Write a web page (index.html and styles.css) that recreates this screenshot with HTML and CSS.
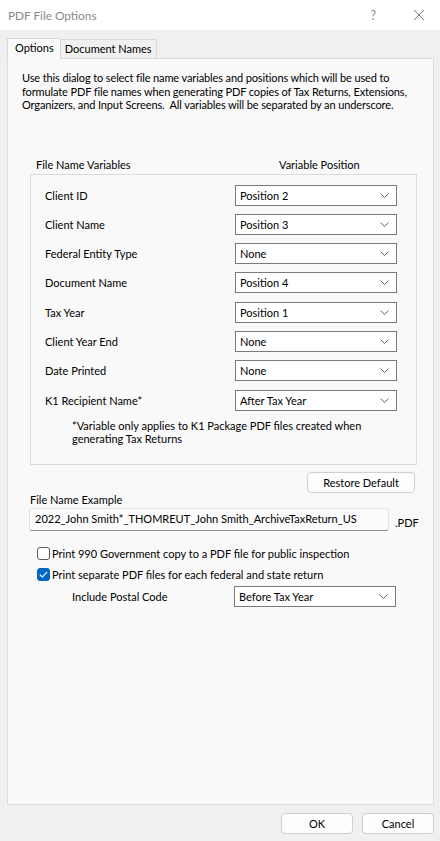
FILE: index.html
```html
<!DOCTYPE html>
<html lang="en">
<head>
    <meta charset="UTF-8">
    <title>PDF File Options</title>
    <link rel="stylesheet" href="styles.css">
</head>
<body>
    <div class="window">
        <div class="titlebar">
            <span class="title">PDF File Options</span>
            <span class="help">?</span>
            <svg class="close" width="12" height="12" viewBox="0 0 12 12">
                <path d="M1 1 L11 11 M11 1 L1 11" stroke="#777" stroke-width="1" fill="none"/>
            </svg>
        </div>

        <div class="tabs">
            <div class="tab active">Options</div>
            <div class="tab">Document Names</div>
        </div>

        <div class="panel">
            <p class="intro">Use this dialog to select file name variables and positions which will be used to formulate PDF file names when generating PDF copies of Tax Returns, Extensions, Organizers, and Input Screens.&nbsp; All variables will be separated by an underscore.</p>

            <div class="group-head">
                <span>File Name Variables</span>
                <span class="pos-head">Variable Position</span>
            </div>
            <div class="group">
                <div class="row"><span class="label">Client ID</span><div class="combo">Position 2<svg width="9" height="5" viewBox="0 0 9 5"><path d="M0.5 0.5 L4.5 4.5 L8.5 0.5" stroke="#666" fill="none"/></svg></div></div>
                <div class="row"><span class="label">Client Name</span><div class="combo">Position 3<svg width="9" height="5" viewBox="0 0 9 5"><path d="M0.5 0.5 L4.5 4.5 L8.5 0.5" stroke="#666" fill="none"/></svg></div></div>
                <div class="row"><span class="label">Federal Entity Type</span><div class="combo">None<svg width="9" height="5" viewBox="0 0 9 5"><path d="M0.5 0.5 L4.5 4.5 L8.5 0.5" stroke="#666" fill="none"/></svg></div></div>
                <div class="row"><span class="label">Document Name</span><div class="combo">Position 4<svg width="9" height="5" viewBox="0 0 9 5"><path d="M0.5 0.5 L4.5 4.5 L8.5 0.5" stroke="#666" fill="none"/></svg></div></div>
                <div class="row"><span class="label">Tax Year</span><div class="combo">Position 1<svg width="9" height="5" viewBox="0 0 9 5"><path d="M0.5 0.5 L4.5 4.5 L8.5 0.5" stroke="#666" fill="none"/></svg></div></div>
                <div class="row"><span class="label">Client Year End</span><div class="combo">None<svg width="9" height="5" viewBox="0 0 9 5"><path d="M0.5 0.5 L4.5 4.5 L8.5 0.5" stroke="#666" fill="none"/></svg></div></div>
                <div class="row"><span class="label">Date Printed</span><div class="combo">None<svg width="9" height="5" viewBox="0 0 9 5"><path d="M0.5 0.5 L4.5 4.5 L8.5 0.5" stroke="#666" fill="none"/></svg></div></div>
                <div class="row"><span class="label">K1 Recipient Name*</span><div class="combo">After Tax Year<svg width="9" height="5" viewBox="0 0 9 5"><path d="M0.5 0.5 L4.5 4.5 L8.5 0.5" stroke="#666" fill="none"/></svg></div></div>
                <p class="note">*Variable only applies to K1 Package PDF files created when generating Tax Returns</p>
            </div>

            <div class="restore-row">
                <div class="btn restore">Restore Default</div>
            </div>

            <div class="example-label">File Name Example</div>
            <div class="example-row">
                <div class="textbox">2022_John Smith*_THOMREUT_John Smith_ArchiveTaxReturn_US</div>
                <span class="ext">.PDF</span>
            </div>

            <div class="check-row">
                <span class="checkbox"></span>
                <span>Print 990 Government copy to a PDF file for public inspection</span>
            </div>
            <div class="check-row">
                <span class="checkbox checked"><svg width="9" height="7" viewBox="0 0 9 7"><path d="M0.8 3.6 L3.3 6 L8.2 0.8" stroke="#fff" stroke-width="1.1" fill="none"/></svg></span>
                <span>Print separate PDF files for each federal and state return</span>
            </div>
            <div class="row postal">
                <span class="label">Include Postal Code</span>
                <div class="combo">Before Tax Year<svg width="9" height="5" viewBox="0 0 9 5"><path d="M0.5 0.5 L4.5 4.5 L8.5 0.5" stroke="#666" fill="none"/></svg></div>
            </div>
        </div>

        <div class="footer">
            <div class="btn">OK</div>
            <div class="btn">Cancel</div>
        </div>
    </div>
</body>
</html>
```

FILE: styles.css
```css
body {
    margin: 0;
    background: #f0f0f0;
    font-family: Lato, "Liberation Sans", sans-serif;
    font-size: 11px;
    color: #000;
}

.window {
    width: 440px;
    height: 841px;
    background: #f0f0f0;
    overflow: hidden;
}

.titlebar {
    height: 30px;
    background: #fff;
    display: flex;
    align-items: center;
    padding-left: 8px;
    box-sizing: border-box;
}

.title {
    flex: 1;
    color: #8a8a8a;
    font-size: 11.8px;
}

.help {
    color: #8a8a8a;
    font-size: 12.5px;
    margin-right: 37px;
}

.close {
    margin-right: 15px;
}

.tabs {
    display: flex;
    align-items: flex-end;
    padding: 7px 0 0 7px;
    height: 21px;
}

.tab {
    height: 18px;
    line-height: 18px;
    padding: 0 4px;
    border: 1px solid #d9d9d9;
    border-bottom: none;
    background: #f0f0f0;
}

.tab.active {
    height: 20px;
    line-height: 18px;
    background: #f9f9f9;
    border-right: none;
    position: relative;
    z-index: 1;
    margin-bottom: -1px;
    padding: 0 6px 0 7px;
}

.panel {
    margin: 0 6px 0 7px;
    height: 747px;
    background: #f9f9f9;
    border: 1px solid #dcdcdc;
    box-sizing: border-box;
    padding: 12px 12px 0 14px;
}

.intro {
    margin: 0;
    line-height: 13.5px;
    letter-spacing: -0.12px;
}

.group-head {
    display: flex;
    margin: 46px 0 0 14px;
    height: 14px;
    line-height: 14px;
}

.group-head span:first-child {
    width: 243px;
}

.group {
    margin: 2px 4px 0 8px;
    border: 1px solid #dcdcdc;
    padding: 10px 0 0 0;
    height: 291px;
    box-sizing: border-box;
}

.row {
    display: flex;
    align-items: center;
    height: 21px;
    margin-bottom: 8.3px;
}

.label {
    width: 204px;
    padding-left: 14px;
    box-sizing: border-box;
}

.combo {
    width: 162px;
    height: 21px;
    box-sizing: border-box;
    border: 1px solid #7a7a7a;
    background: #fff;
    display: flex;
    align-items: center;
    justify-content: space-between;
    padding: 0 7px 0 4px;
}

.note {
    margin: 3px 0 0 41px;
    line-height: 13px;
    width: 320px;
}

.restore-row {
    display: flex;
    justify-content: flex-end;
    margin-top: 7px;
    padding-right: 6px;
}

.btn {
    width: 72px;
    height: 21px;
    line-height: 19px;
    text-align: center;
    background: #fdfdfd;
    border: 1px solid #d0d0d0;
    border-radius: 4px;
    box-sizing: border-box;
}

.btn.restore {
    width: 108px;
}

.example-label {
    margin: 0 0 0 8px;
    line-height: 14px;
}

.example-row {
    display: flex;
    align-items: flex-end;
    margin: 1px 0 0 7px;
}

.textbox {
    width: 360px;
    height: 23px;
    line-height: 20px;
    background: #fbfbfb;
    border: 1px solid #e3e3e3;
    border-bottom: 1px solid #8d8d8d;
    border-radius: 3px;
    box-sizing: border-box;
    padding-left: 5px;
    white-space: nowrap;
    overflow: hidden;
}

.ext {
    margin-left: 6px;
    line-height: 16px;
}

.check-row {
    display: flex;
    align-items: center;
    height: 14px;
    margin: 16px 0 0 15px;
    gap: 2px;
}

.check-row + .check-row {
    margin-top: 7px;
}

.checkbox {
    width: 13px;
    height: 13px;
    box-sizing: border-box;
    border: 1px solid #5b5b5b;
    border-radius: 3px;
    background: #fff;
    display: flex;
    align-items: center;
    justify-content: center;
}

.checkbox.checked {
    background: #0067c0;
    border-color: #0067c0;
}

.row.postal {
    margin-top: 4px;
    margin-left: 8px;
}

.row.postal .label {
    padding-left: 42px;
}

.footer {
    display: flex;
    justify-content: flex-end;
    gap: 9px;
    padding: 8px 6px 0 0;
}
```
